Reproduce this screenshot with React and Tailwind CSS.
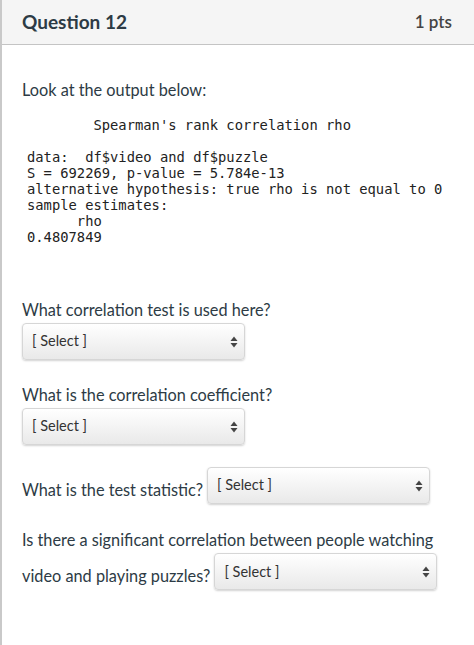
const Arrows = () => (
  <svg width="8" height="12" viewBox="0 0 8 12" className="shrink-0">
    <path d="M4 0.5 L7.5 5 L0.5 5 Z" fill="#444" />
    <path d="M4 11.5 L7.5 7 L0.5 7 Z" fill="#444" />
  </svg>
)

const SelectBox = ({ className = '' }) => (
  <span
    className={`inline-flex h-[37px] w-[223px] items-center justify-between rounded-[4px] border border-[#d6d6d6] bg-gradient-to-b from-white to-[#e9e9e9] pl-[9px] pr-[6px] text-[14.5px] leading-none text-[#333] shadow-[0_1px_2px_rgba(0,0,0,0.18)] ${className}`}
  >
    <span>[ Select ]</span>
    <Arrows />
  </span>
)

const output = `        Spearman's rank correlation rho

data:  df$video and df$puzzle
S = 692269, p-value = 5.784e-13
alternative hypothesis: true rho is not equal to 0
sample estimates:
      rho
0.4807849`

export default function App() {
  return (
    <div className="min-h-[645px] w-[474px] border-l-2 border-[#c9c9c9] bg-white font-['Lato','Liberation_Sans',sans-serif] text-[#2d3b45]">
      {/* Header */}
      <div className="flex h-[45px] items-center justify-between border-b border-[#c4c4c4] bg-[#f5f5f5] pl-[20px] pr-[22px]">
        <h2 className="text-[19px] font-bold text-[#2d3b45]">Question 12</h2>
        <span className="text-[17px] font-semibold text-[#444]">1 pts</span>
      </div>

      <div className="pl-[20px] pr-[12px] pt-[33px] text-[16.3px] text-[#2d3b45]">
        <p className="leading-[24px]">Look at the output below:</p>

        <pre className="mt-[15px] pl-[5px] font-['DejaVu_Sans_Mono',monospace] text-[13.8px] leading-[16px] text-[#222]">
          {output}
        </pre>

        <p className="mt-[53px] leading-[24px]">What correlation test is used here?</p>
        <div className="mt-[1px] flex">
          <SelectBox />
        </div>

        <p className="mt-[23px] leading-[24px]">What is the correlation coefficient?</p>
        <div className="mt-[1px] flex">
          <SelectBox />
        </div>

        <div className="mt-[20px] flex items-end gap-[4px]">
          <span className="leading-[24px]">What is the test statistic?</span>
          <SelectBox className="relative top-[2px]" />
        </div>

        <p className="mt-[20px] leading-[36px]">
          Is there a significant correlation between people watching video and playing puzzles?{' '}
          <SelectBox className="relative top-[-6px] align-middle" />
        </p>
      </div>
    </div>
  )
}
